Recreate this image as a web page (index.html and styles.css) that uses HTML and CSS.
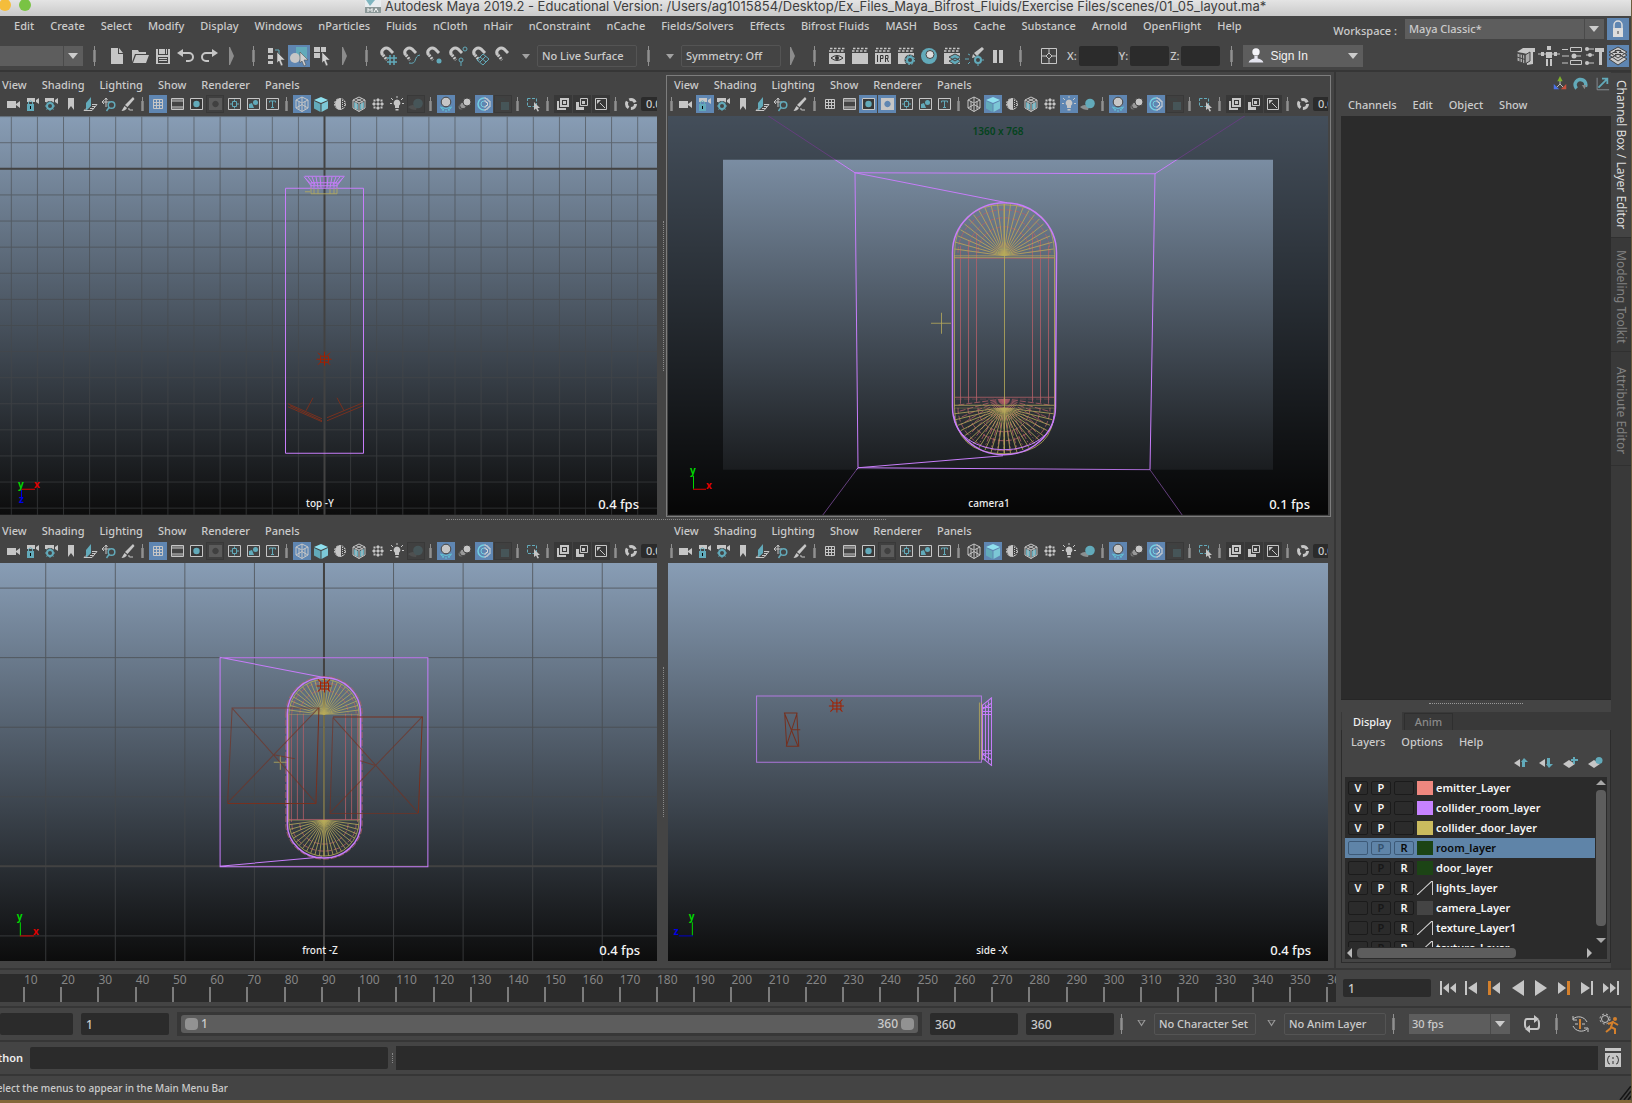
FILE: index.html
```html
<!DOCTYPE html>
<html lang="en">
<head>
<meta charset="utf-8">
<title>Autodesk Maya 2019.2</title>
<link rel="stylesheet" href="styles.css">
</head>
<body>
<svg class="defs" aria-hidden="true">
  <defs>
    <linearGradient id="sky" x1="0" y1="0" x2="0" y2="1"><stop offset="0" stop-color="#889db5"/><stop offset="1" stop-color="#0c0c0c"/></linearGradient>
    <pattern id="gridTop" width="26.1" height="26.1" patternUnits="userSpaceOnUse" x="10.8" y="0.4"><path d="M.5 0V26.1M0 .5H26.1" stroke="#444648" stroke-width="1"/></pattern>
    <pattern id="gridFront" width="69.3" height="69.3" patternUnits="userSpaceOnUse" x="46.3" y="24.5"><path d="M.5 0V69.3M0 .5H69.3" stroke="#444648" stroke-width="1"/></pattern>
  </defs>
  <symbol id="fan" viewBox="-100 -100 200 100" preserveAspectRatio="none"><path vector-effect="non-scaling-stroke" fill="none" d="M-100 0H100M0 0L99-13M0 0L97-26M0 0L92-38M0 0L87-50M0 0L79-61M0 0L71-71M0 0L61-79M0 0L50-87M0 0L38-92M0 0L26-97M0 0L13-99M0 0V-100M0 0L-99-13M0 0L-97-26M0 0L-92-38M0 0L-87-50M0 0L-79-61M0 0L-71-71M0 0L-61-79M0 0L-50-87M0 0L-38-92M0 0L-26-97M0 0L-13-99"/></symbol>
  <symbol id="star" viewBox="-8 -8 16 16"><path d="M-7.500.5H7.500M.5-7V7M-6-6L-3-3M6 6L3 3M6-6L3-3M-6 6L-3 3M-3.500-2.500H4.500V3.500H-3.500Z" fill="none" stroke="#a32000"/></symbol>

  <!-- panel icons, 18 x 18 -->
  <symbol id="cam" viewBox="0 0 18 18"><path class="f" d="M2 6h9v7H2zM11 9l4-3v7l-4-3z"/></symbol>
  <symbol id="camlock" viewBox="0 0 18 18"><path class="f" d="M3 3h8v4H3zM12 5l3-2v6l-3-2z"/><path class="t" d="M3 9h7v7H3z"/><path class="ts" d="M4.500 9V7q2-2.500 4 0v2"/><path d="M6 11h1v3H6z"/></symbol>
  <symbol id="camgear" viewBox="0 0 18 18"><path class="f" d="M2 3h9v4H2zM12 5l3-2v6l-3-2z"/><circle cx="7" cy="11" r="5" fill="#444"/><circle class="ts" cx="7" cy="11" r="3" stroke-width="2"/><path class="ts" d="M7 6v2M7 14v2M2 11h2M10 11h2M3.500 7.500l1 1M10.500 7.500l-1 1M3.500 14.500l1-1M10.500 14.500l-1-1"/></symbol>
  <symbol id="mark" viewBox="0 0 18 18"><path class="f" d="M6 3h6v12l-3-4-3 4z"/></symbol>
  <symbol id="plane" viewBox="0 0 18 18"><path class="t" d="M5 8l5-6v9l-5 5z"/><path class="s" d="M11 9.500h5l-5 6H3l2-2M11 11.500h3M9 13.500h4"/></symbol>
  <symbol id="pan" viewBox="0 0 18 18"><path class="s" d="M2 7h8M6 3v9M2 7l2-2M2 7l2 2M6 3L4.500 5M6 3l1.500 2"/><circle class="ts" cx="11.500" cy="10" r="3.300" stroke-width="1.500"/><path class="ts" stroke-width="1.500" d="M9 12.500L6.500 16"/></symbol>
  <symbol id="pen" viewBox="0 0 18 18"><path class="f" d="M14 2l1.500 2-7 8-2.500-2zM5.500 11l2.500 2c-1 2-3 3-5.500 3z"/><path class="s" d="M10 13q-1 2 1 2h3"/></symbol>
  <symbol id="grid" viewBox="0 0 18 18"><path class="s" d="M4.500 4.500h9v9h-9zM4.500 7.500h9M4.500 10.500h9M7.500 4.500v9M10.500 4.500v9"/></symbol>
  <symbol id="film" viewBox="0 0 18 18"><path class="s" d="M3.500 3.500h12v11h-12zM3.500 6h12M3.500 12h12"/><path class="s" stroke-dasharray="1 1" d="M3.500 4.700h12M3.500 13.300h12"/></symbol>
  <symbol id="resgate" viewBox="0 0 18 18"><path d="M3 3h12v12H3z" fill="#383838"/><path class="s" d="M3.500 3.500h12v11h-12z"/><circle class="t" cx="9.500" cy="9" r="3.200"/></symbol>
  <symbol id="gatemask" viewBox="0 0 18 18"><path class="f" fill-rule="evenodd" d="M3 3h13v12H3zM9.500 5.800a3.200 3.200 0 1 0 .01 0z"/></symbol>
  <symbol id="field" viewBox="0 0 18 18"><path class="s" d="M3.500 3.500h12v11h-12z"/><path class="ts" d="M7.500 6.500h4v5h-4zM9.500 4.500v2M9.500 11.500v2M5 9h2.500M11.500 9h2.500"/></symbol>
  <symbol id="safe" viewBox="0 0 18 18"><path class="s" d="M3.500 3.500h12v11h-12z"/><circle class="t" cx="11.500" cy="7.500" r="2.500"/><path class="t" d="M5 13V9l3-1 2 5z"/></symbol>
  <symbol id="title" viewBox="0 0 18 18"><path class="s" d="M3.500 3.500h12v11h-12z"/><path class="ts" d="M6.500 7.500V6h6v1.500M9.500 6v6.500M8 12.500h3"/></symbol>
  <symbol id="wire" viewBox="0 0 18 18"><path class="s" d="M9 2l6 3v8l-6 3.500L3 13V5zM3 5l6 3 6-3M9 8v8.500M9 2v5M3 13l6-3.500 6 3.500M6 6.500v8M12 6.500v8"/></symbol>
  <symbol id="shade" viewBox="0 0 18 18"><path fill="#8fe0ee" d="M9 2l7 3-7 3-7-3z"/><path class="t" d="M2 6l6.500 3v8L2 13.500z"/><path fill="#7cc7d6" d="M16 6L9.500 9v8l6.500-3.500z"/></symbol>
  <symbol id="half" viewBox="0 0 18 18"><circle class="s" cx="9" cy="9" r="5.500" stroke-dasharray="2 1"/><path class="f" d="M10 3a6 6 0 0 0 0 12z"/><path class="s" stroke-dasharray="1 1" d="M11.500 5v9M13.500 6v6"/></symbol>
  <symbol id="texcube" viewBox="0 0 18 18"><path class="t" d="M4 7l4 2v6l-4-2zM10 9l4-2v6l-4 2z"/><path class="s" d="M9 2l6 3v8l-6 3.500L3 13V5zM3 5l6 3 6-3M9 8v8.500M6 3.500l6 3v8M12 3.500l-6 3v8"/></symbol>
  <symbol id="checker" viewBox="0 0 18 18"><path class="f" d="M9 3l2 2-2 2-2-2zM5 7l2 2-2 2-2-2zM9 7l2 2-2 2-2-2zM13 7l2 2-2 2-2-2zM9 11l2 2-2 2-2-2zM4.500 4.500h2v2h-2zM11.500 4.500h2v2h-2zM4.500 11.500h2v2h-2zM11.500 11.500h2v2h-2z"/></symbol>
  <symbol id="bulb" viewBox="0 0 18 18"><path class="f" d="M9 4.500a3.500 3.500 0 0 1 2 6.300V13H7v-2.200a3.500 3.500 0 0 1 2-6.300zM7.500 14h3v1.500h-3z"/><path class="s" d="M9 1v2M3 3l2 2M15 3l-2 2M2 8.500h2M14 8.500h2"/></symbol>
  <symbol id="shadow" viewBox="0 0 18 18"><path fill="#8a8f90" d="M1 12q5-4 9 0l-1 3q-5 0-8-3z"/><circle class="t" cx="11" cy="8.500" r="4.800"/></symbol>
  <symbol id="ao" viewBox="0 0 18 18"><path d="M3 12q6 3 12 0M5 15h2M8 16h2M11 15h2M4 13l3 2M14 13l-3 2" fill="none" stroke="#63c3d4"/><circle class="f" cx="9" cy="7" r="4.800" stroke="#444"/></symbol>
  <symbol id="blur" viewBox="0 0 18 18"><circle cx="5" cy="12" r="2.500" fill="#777"/><circle cx="7" cy="10.500" r="3.300" fill="#999" stroke="#444"/><circle class="f" cx="11" cy="7" r="4" stroke="#444"/></symbol>
  <symbol id="aa" viewBox="0 0 18 18"><path d="M9 3a6 6 0 1 0 0 12" fill="none" stroke="#74cfe0" stroke-width="1.500"/><path d="M9 3h2v1h2v2h2v6h-2v2h-2v1H9M9 6h2v1.500h1.500v3H11V12H9" fill="none" stroke="#d8d8d8"/><path d="M9 6a3 3 0 0 0 0 6" fill="none" stroke="#74cfe0"/></symbol>
  <symbol id="dof" viewBox="0 0 18 18"><path d="M3 3h8v3H3z" fill="#3b4a4b"/><path class="t" d="M7 7h8v8H7z"/></symbol>
  <symbol id="iso" viewBox="0 0 18 18"><path class="ts" stroke-dasharray="3 1.500" d="M3.500 3.500h9v8h-9z"/><path class="f" d="M10 7l6 6h-2.500l1.500 3-1.500.5-1.500-3-2 1.500z"/></symbol>
  <symbol id="xray" viewBox="0 0 18 18"><path d="M0 0h18v18H0z" fill="#383838"/><path class="f" fill-rule="evenodd" d="M6 3h9v9h-9zM8 5v5h5V5z"/><path class="f" d="M3 6h2v7h7v2H3zM9 6h3v3H9z"/></symbol>
  <symbol id="xjoint" viewBox="0 0 18 18"><path d="M0 0h18v18H0z" fill="#383838"/><path class="s" d="M7.500 3.500h7v7h-7z"/><path class="f" d="M3 7h3v5h5v3H3zM9 6h3v3H9z"/></symbol>
  <symbol id="xcomp" viewBox="0 0 18 18"><path d="M0 0h18v18H0z" fill="#383838"/><path class="s" d="M3.500 3.500h11v11h-11zM8 8l5 5"/><path class="f" d="M5 5h4l-4 4z"/></symbol>
  <symbol id="expo" viewBox="0 0 18 18"><circle cx="9" cy="9" r="4.500" fill="none" stroke="#c6c6c6" stroke-width="3" stroke-dasharray="7 2.420"/></symbol>

  <!-- status line icons, 22 x 22 -->
  <symbol id="new" viewBox="0 0 22 22"><path class="f" d="M5 3h7v6h5v10H5zM13 3l4 5h-4z"/></symbol>
  <symbol id="open" viewBox="0 0 22 22"><path class="f" d="M3 5h6l1 2h7v2H6L3 17zM7 10h13l-3 8H4z"/></symbol>
  <symbol id="save" viewBox="0 0 22 22"><path class="f" fill-rule="evenodd" d="M4 4h2v6h10V4h2v15H4zM6 12v6h10v-6z"/><path class="f" d="M7 4h6v5H7zM14 4h1v5h-1zM7 13h8v1H7zM7 15h8v1H7z"/></symbol>
  <symbol id="undo" viewBox="0 0 22 22"><path d="M6 8h8a4 4 0 0 1 0 8h-3" fill="none" stroke="#c6c6c6" stroke-width="2"/><path class="f" d="M2 8l6-4v8z"/></symbol>
  <symbol id="selh" viewBox="0 0 22 22"><path class="f" d="M3 3h5v5H3zM3 10h5v4H3zM3 16h5v3H3z"/><path class="ts" d="M10 5h4v8"/><path class="arrow" d="M12 7l8 8h-4l2 5-2 1-2-5-2 2z"/></symbol>
  <symbol id="selo" viewBox="0 0 22 22"><path class="t" d="M8 2h11v12H8z"/><circle class="f" cx="7" cy="13" r="5"/><path class="arrow" d="M12 7l8 8h-4l2 5-2 1-2-5-2 2z"/></symbol>
  <symbol id="selc" viewBox="0 0 22 22"><path class="f" d="M3 2h6v5H3zM10 2h5v5h-5zM3 8h6v5H3z"/><path class="arrow" d="M11 7l8 8h-4l2 5-2 1-2-5-2 2z"/></symbol>
  <symbol id="magnet" viewBox="0 0 22 22"><path d="M5 10L4 9a4.500 4.500 0 0 1 7-5l4 4" fill="none" stroke="#c6c6c6" stroke-width="3"/><path d="M5 10l4 5" fill="none" stroke="#c6c6c6" stroke-width="3" stroke-dasharray="2 1"/></symbol>
  <symbol id="mgrid" viewBox="0 0 22 22"><use href="#magnet"/><path class="ts" stroke-width="1.500" d="M9 13h10M9 17h10M12 10v10M16 10v10"/></symbol>
  <symbol id="mcurve" viewBox="0 0 22 22"><use href="#magnet"/><path class="ts" d="M8 18c9 2 4-7 11-8"/></symbol>
  <symbol id="mpoint" viewBox="0 0 22 22"><use href="#magnet"/><circle class="t" cx="15" cy="16" r="2.500"/></symbol>
  <symbol id="mproj" viewBox="0 0 22 22"><use href="#magnet"/><circle class="ts" cx="18" cy="4" r="2"/><circle class="ts" cx="14" cy="15" r="2"/><path class="ts" d="M14 17v4"/></symbol>
  <symbol id="mplane" viewBox="0 0 22 22"><use href="#magnet"/><path class="ts" d="M13 9l6 5-6 6-6-5zM10 12l6 5M16 11l-6 6"/></symbol>
  <symbol id="clap" viewBox="0 0 22 22"><path class="f" d="M3 8h16v11H3z"/><path d="M3 6h16M4 3.500h15" stroke="#c6c6c6" stroke-width="1.500" stroke-dasharray="2.500 1.500"/></symbol>
  <symbol id="rview" viewBox="0 0 22 22"><use href="#clap"/><path d="M5 13q6-5 12 0q-6 5-12 0z" fill="none" stroke="#333"/><circle cx="11" cy="13" r="2" fill="#333"/></symbol>
  <symbol id="ripr" viewBox="0 0 22 22"><use href="#clap"/><path d="M5.500 10v7M8.500 17v-6.500h2.500v3H8.500M13.500 17v-6.500H16v3h-2.500M15 13.500l1.500 3.500" fill="none" stroke="#333"/></symbol>
  <symbol id="rset" viewBox="0 0 22 22"><use href="#clap"/><circle cx="15" cy="15" r="5.500" fill="#444"/><circle cx="15" cy="15" r="3" fill="none" stroke="#62aaba" stroke-width="2"/><circle class="ts" cx="15" cy="15" r="4.500" stroke-dasharray="2 1.500"/></symbol>
  <symbol id="hyper" viewBox="0 0 22 22"><circle class="t" cx="11" cy="11" r="8"/><circle cx="12" cy="9.500" r="4" fill="#ddd" stroke="#444"/></symbol>
  <symbol id="rlay" viewBox="0 0 22 22"><use href="#clap"/><path class="t" stroke="#444" d="M14 13l6 3-6 4-6-4zM14 9l6 3-6 4-6-4z"/></symbol>
  <symbol id="lite" viewBox="0 0 22 22"><path class="f" d="M18 2l2 2-7 7-3-3zM9 9l3 3-4 1z"/><circle cx="14" cy="15" r="3" fill="none" stroke="#62aaba" stroke-width="2"/><path class="ts" d="M4 9l2 1M1 14h4M4 19l2-2M14 10v1M14 19v2M18 15h2"/></symbol>
  <symbol id="pause" viewBox="0 0 22 22"><path class="f" d="M6 5h4v13H6zM12 5h4v13h-4z"/></symbol>
  <symbol id="input" viewBox="0 0 22 22"><path class="s" d="M3.500 3.500h15v15h-15zM11 3.500v5M11 13.500v5M3.500 11h5M13.500 11h5M11 8l3 3-3 3-3-3z"/></symbol>
  <symbol id="lock" viewBox="0 0 22 22"><path d="M7 10V7a4 4 0 0 1 8 0v3" fill="none" stroke="#ddd" stroke-width="1.500"/><path fill="#ddd" d="M6 10h10v9H6z"/><path d="M11 13v3" stroke="#444"/></symbol>
  <symbol id="user" viewBox="0 0 22 22"><circle cx="11" cy="6" r="4.500" fill="#f4f4f8"/><path fill="#e4e4ee" d="M9 11h4v3q6 1 7 5H2q1-4 7-5z"/></symbol>
  <symbol id="mtk" viewBox="0 0 22 22"><path class="f" d="M2 7l6-4h12v4h-2v12l-6 1V9L8 8z"/><path fill="#aaa" stroke="#444" d="M2 8l8 2v9l-8-3zM10 10l5-3v9l-5 3z"/><path d="M2 12l8 2.500M5 9v8M7.500 10v8" stroke="#444"/></symbol>
  <symbol id="rig" viewBox="0 0 22 22"><path class="f" d="M9 1h4v4H9zM8 7h6v6H8zM3 7h3v4H3zM16 7h3v4h-3zM8 14h2v7H8zM12 14h2v7h-2z"/><path class="s" d="M0 9h22"/></symbol>
  <symbol id="attr" viewBox="0 0 22 22"><path class="s" d="M1 4.500h6M1 11h7M1 18h6M9.500 2.500h11v4h-11zM9.500 15.500h11v4h-11zM14 11h6"/><circle class="f" cx="13" cy="11" r="2.500"/></symbol>
  <symbol id="tools" viewBox="0 0 22 22"><path class="s" d="M2 4h8M2 10h8M2 18h8"/><circle class="f" cx="3" cy="4" r="2"/><circle class="f" cx="6" cy="10" r="2"/><circle class="f" cx="3" cy="18" r="2"/><path class="f" d="M11 3h9v4h-2v13h-3V7h-4z"/></symbol>
  <symbol id="layers" viewBox="0 0 22 22"><path fill="#ccc" stroke="#444" d="M11 9l9 5-9 6-9-6zM11 5l9 5-9 6-9-6zM11 2l9 5-9 6-9-6z"/><path d="M6 7.500h4M12 7.500h4M8 9.500h6M8 5.500h6" stroke="#444"/></symbol>
</svg>

<header class="titlebar">
  <span class="dot amber"></span><span class="dot green"></span>
  <svg class="docicon" viewBox="0 0 16 16" aria-hidden="true"><path d="M0 0h16v13H0z" fill="#e9eef0"/><path d="M1 0h9l-5 6z" fill="#7fb6c0"/><path d="M0 7h16v6H0z" fill="#8b9898"/><path d="M3 12V8.500l2 2 2-2V12M9 12l2-3.500L13 12" fill="none" stroke="#fff"/></svg>
  <h1>Autodesk Maya 2019.2 - Educational Version: /Users/ag1015854/Desktop/Ex_Files_Maya_Bifrost_Fluids/Exercise Files/scenes/01_05_layout.ma*</h1>
</header>

<div class="menubar">
  <nav class="menu main-menu" aria-label="Main menu">
    <button>Edit</button><button>Create</button><button>Select</button><button>Modify</button><button>Display</button><button>Windows</button><button>nParticles</button><button>Fluids</button><button>nCloth</button><button>nHair</button><button>nConstraint</button><button>nCache</button><button>Fields/Solvers</button><button>Effects</button><button>Bifrost Fluids</button><button>MASH</button><button>Boss</button><button>Cache</button><button>Substance</button><button>Arnold</button><button>OpenFlight</button><button>Help</button>
  </nav>
  <label class="ws-label" for="ws">Workspace :</label>
  <span class="combo ws"><select id="ws"><option>Maya Classic*</option></select></span>
  <button class="tool on" aria-label="Lock workspace"><svg><use href="#lock"/></svg></button>
</div>

<div class="statusline">
  <span class="combo mode"><select aria-label="Menu set"><option></option></select></span>
  <i class="sep"></i>
  <button class="tool" aria-label="New scene"><svg><use href="#new"/></svg></button>
  <button class="tool" aria-label="Open scene"><svg><use href="#open"/></svg></button>
  <button class="tool" aria-label="Save scene"><svg><use href="#save"/></svg></button>
  <button class="tool" aria-label="Undo"><svg><use href="#undo"/></svg></button>
  <button class="tool flip" aria-label="Redo"><svg><use href="#undo"/></svg></button>
  <i class="chev"></i><i class="sep"></i>
  <button class="tool" aria-label="Select by hierarchy"><svg><use href="#selh"/></svg></button>
  <button class="tool on" aria-label="Select by object"><svg><use href="#selo"/></svg></button>
  <button class="tool" aria-label="Select by component"><svg><use href="#selc"/></svg></button>
  <i class="chev"></i><i class="sep"></i>
  <button class="tool" aria-label="Snap to grids"><svg><use href="#mgrid"/></svg></button>
  <button class="tool" aria-label="Snap to curves"><svg><use href="#mcurve"/></svg></button>
  <button class="tool" aria-label="Snap to points"><svg><use href="#mpoint"/></svg></button>
  <button class="tool" aria-label="Snap to projected center"><svg><use href="#mproj"/></svg></button>
  <button class="tool" aria-label="Snap to view planes"><svg><use href="#mplane"/></svg></button>
  <button class="tool" aria-label="Make live"><svg><use href="#magnet"/></svg></button>
  <i class="drop"></i>
  <button class="outlined live">No Live Surface</button>
  <i class="sep"></i><i class="drop"></i>
  <button class="outlined live">Symmetry: Off</button>
  <i class="chev"></i><i class="sep"></i>
  <button class="tool" aria-label="Render view"><svg><use href="#rview"/></svg></button>
  <button class="tool" aria-label="Render frame"><svg><use href="#clap"/></svg></button>
  <button class="tool" aria-label="IPR render"><svg><use href="#ripr"/></svg></button>
  <button class="tool" aria-label="Render settings"><svg><use href="#rset"/></svg></button>
  <button class="tool" aria-label="Hypershade"><svg><use href="#hyper"/></svg></button>
  <button class="tool" aria-label="Render setup"><svg><use href="#rlay"/></svg></button>
  <button class="tool" aria-label="Light editor"><svg><use href="#lite"/></svg></button>
  <button class="tool" aria-label="Pause viewport"><svg><use href="#pause"/></svg></button>
  <i class="sep"></i>
  <button class="tool coord" aria-label="Input mode"><svg><use href="#input"/></svg></button>
  <label class="xyz">X:<input type="text"></label>
  <label class="xyz">Y:<input type="text"></label>
  <label class="xyz">Z:<input type="text"></label>
  <i class="sep"></i>
  <button class="signin"><svg><use href="#user"/></svg>Sign In<i class="caret"></i></button>
  <span class="spring"></span>
  <button class="tool" aria-label="Modeling toolkit"><svg><use href="#mtk"/></svg></button>
  <button class="tool" aria-label="Character controls"><svg><use href="#rig"/></svg></button>
  <button class="tool" aria-label="Attribute editor"><svg><use href="#attr"/></svg></button>
  <button class="tool" aria-label="Tool settings"><svg><use href="#tools"/></svg></button>
  <button class="tool on" aria-label="Channel box"><svg><use href="#layers"/></svg></button>
</div>

<main class="workspace">
  <div class="views">
    <section class="panel left" data-on="grid wire ao aa" data-off="gatemask shadow dof">
      <svg class="canvas" viewBox="0 0 657 399" preserveAspectRatio="xMidYMid slice">
        <rect width="657" height="399" fill="url(#sky)"/>
        <rect width="657" height="399" fill="url(#gridTop)" opacity=".6"/>
        <path d="M0 53H657M324.500 0V399" stroke="#424242" stroke-width="2"/>
        <path d="M285.500 72.500H363.500V337.500H285.500Z" class="room"/>
        <path class="door" d="M311 72v6h26v-6M314 73v5M318 73v5M330 73v5M334 73v5M305 76h5"/>
        <path class="room" d="M304.500 60.500h40M304 61l7 7M344 61l-7 7M311 67h26M311 70h26M311 67v5M337 67v5M308 61l5 7M312 61l3 8M316 61l2 11M320 61l1 11M324 61v11M328 61l-1 11M332 61l-2 11M336 61l-3 8M340 61l-5 7M314 67v5M334 67v5M305 62l6 8M343 62l-6 8"/>
        <use href="#star" x="316" y="235" width="16" height="16"/>
        <path class="light" d="M288 288l34 15M288 291l34 15M290 290l32 15M363 287l-36 15M363 290l-36 15M313 282l-7 13M337 282l7 13"/>
        <path stroke="#e00000" d="M21 373.500H35"/><path stroke="#0000e8" d="M21.500 374V384"/>
        <text class="ax g" x="18" y="372">y</text><text class="ax r" x="34" y="372">x</text><text class="ax b" x="19" y="387">z</text>
        <text class="hud" x="320" y="391" text-anchor="middle">top -Y</text>
        <text class="fps" x="639" y="393" text-anchor="end">0.4 fps</text>
      </svg>
    </section>
    <i class="split v"></i>
    <section class="panel active" data-on="camlock resgate gatemask shade bulb ao aa" data-off="dof">
      <svg class="canvas" viewBox="0 0 660 399" preserveAspectRatio="xMidYMid slice">
        <rect width="660" height="399" fill="url(#sky)"/>
        <path class="emitline" d="M292.500 130V288M300.500 124V287M308.500 118V286M364.500 118V286M372.500 124V287M380.500 130V288M287 281.500H386M287 142.500H386"/>
        <path class="emit" d="M290 137a46 43 0 0 1 92 0M300 137a36 35 0 0 1 72 0M310 137a26 26 0 0 1 52 0M290 292a46 43 0 0 0 92 0M300 292a36 33 0 0 0 72 0M310 292a26 24 0 0 0 52 0"/>
        <use class="emit" href="#fan" x="288" y="88" width="96" height="52" opacity=".5"/>
        <use class="emit" href="#fan" x="288" y="283" width="96" height="50" transform="matrix(1 0 0 -1 0 616)"/>
        <use class="door" href="#fan" x="286" y="88" width="100" height="52"/>
        <use class="door" href="#fan" x="286" y="292" width="100" height="46" transform="matrix(1 0 0 -1 0 630)"/>
        <path class="door" d="M286.500 139q0-50 50-50t50 50V292q0 46-50 46t-50-46ZM336.500 88V338M286 141.500H386M286 289.500H386M263 207.500H283M273.500 197V218"/>
        <path class="room" d="M187 57L487 58L482 354L190 352ZM100 0L187 57L339 87M577 0L487 58M155 399L190 352L335 340M514 399L482 354"/>
        <path class="room thick" d="M284.500 137a52 50 0 0 1 104 0L387.500 291a51.500 48 0 0 1-103 0Z"/>
        <path class="room" d="M286 300a50 34 0 0 0 100 0"/>
        <path fill="#000" opacity=".5" fill-rule="evenodd" d="M0 0H660V399H0ZM55 44V354H605V44Z"/>
        <path stroke="#e00000" d="M25 373.500H38"/><path stroke="#00d800" d="M25.500 373V360"/>
        <text class="ax g" x="22" y="358">y</text><text class="ax r" x="38" y="373">x</text>
        <text class="hud res" x="330" y="19" text-anchor="middle">1360 x 768</text>
        <text class="hud" x="321" y="391" text-anchor="middle">camera1</text>
        <text class="fps" x="642" y="393" text-anchor="end">0.1 fps</text>
      </svg>
    </section>
    <i class="split h"></i>
    <section class="panel left" data-on="grid wire ao aa" data-off="gatemask shadow dof">
      <svg class="canvas" viewBox="0 0 657 397" preserveAspectRatio="xMidYMid slice">
        <rect width="657" height="397" fill="url(#sky)"/>
        <rect width="657" height="397" fill="url(#gridFront)" opacity=".7"/>
        <path d="M0 302H657M324 0V397" stroke="#424242" stroke-width="2"/>
        <path class="emitline" d="M288.500 150V258M291.500 150V258M297.500 150V256M303.500 150V256M345.500 150V256M351.500 150V256M357.500 150V258M288 255.500H361"/>
        <path class="emit" d="M292 150a32 31 0 0 1 64 0M300 150a24 23 0 0 1 48 0M292 260a32 27 0 0 0 64 0M300 260a24 20 0 0 0 48 0M286 150a38 37 0 0 1 76 0V260a38 35 0 0 1-76 0Z"/>
        <use class="door" href="#fan" x="289" y="116" width="70" height="35"/>
        <use class="door" href="#fan" x="289" y="256" width="70" height="36" transform="matrix(1 0 0 -1 0 548)"/>
        <path class="door" d="M289 151a35 35 0 0 1 70 0V257a35 35 0 0 1-70 0ZM324 116V292M274 198.500H287M280.500 192V206"/>
        <path class="room" d="M220.500 94.500H427.500V302.500H220.500ZM220 94L324 114M220 302L322 293"/>
        <path class="room thick" d="M287.500 150a36.500 36 0 0 1 73 0V260a36.500 34 0 0 1-73 0Z"/>
        <path class="light" d="M228 239.500H316L319 144M333 153.500H422L418 249"/>
        <path class="light faint" d="M319 144.500H232.500L228 239M232 144L316 239M228 239L319 144M274 191L295 195M333 154L330 249.500H418M333 154L418 249M330 249L422 153M376 202L360 197"/>
        <use href="#star" x="316" y="114" width="16" height="16"/>
        <path stroke="#e00000" d="M21 371.500H35"/><path stroke="#00d800" d="M21.500 371V358"/>
        <text class="ax g" x="18" y="356">y</text><text class="ax r" x="34" y="371">x</text>
        <text class="hud" x="320" y="390" text-anchor="middle">front -Z</text>
        <text class="fps" x="639" y="391" text-anchor="end">0.4 fps</text>
      </svg>
    </section>
    <i class="split v"></i>
    <section class="panel" data-on="shade ao aa" data-off="gatemask dof">
      <svg class="canvas" viewBox="0 0 660 397" preserveAspectRatio="xMidYMid slice">
        <rect width="660" height="397" fill="url(#sky)"/>
        <path class="room" opacity=".8" d="M89.500 132.500H313.500V198.500H89.500Z"/>
        <path class="light" d="M117.500 149.500H129.500L131.500 182.500H119.500ZM117 149L131 183M130 149L119 183M125 166h8"/>
        <use href="#star" x="161" y="134" width="16" height="16"/>
        <path class="door" d="M311.500 139V196M313.500 139V196"/>
        <path class="room" d="M323.500 135V201M320.500 138V198M317.500 141V196M314.500 141V196M314 142l10-8M314 194l10 8M314 146l9-6M314 190l9 6M314 144h9M314 190h9M314 187h9M314 148h9M314 151h9"/>
        <path stroke="#00d800" d="M25.500 371V358"/><path stroke="#0000c8" d="M26 371.500H12"/>
        <text class="ax g" x="22" y="356">y</text><text class="ax b" x="7" y="371">z</text>
        <text class="hud" x="324" y="390" text-anchor="middle">side -X</text>
        <text class="fps" x="642" y="391" text-anchor="end">0.4 fps</text>
      </svg>
    </section>
  </div>

  <aside class="dock">
    <div class="dock-icons">
      <svg viewBox="0 0 18 18"><path d="M9 9v-4M9 9l-5 5M9 9l5 5" stroke="#ccc"/><path d="M9 0l3 6H6z" fill="#7fb02c"/><path d="M2 9l6 6H2z" fill="#4a72e8"/><path d="M16 9l-6 6h6z" fill="#c9503c"/></svg>
      <svg viewBox="0 0 18 18"><path d="M4 14a6 6 0 1 1 10-2" fill="none" stroke="#62aaba" stroke-width="4"/><path d="M10 10h5l-2 5z" fill="#888"/></svg>
      <svg viewBox="0 0 18 18"><path d="M3.500 2v13.500H17" fill="none" stroke="#8b9399"/><path d="M5 13L14 4M9 3h6v6" fill="none" stroke="#62aaba" stroke-width="2"/></svg>
    </div>
    <nav class="menu channel-menu" aria-label="Channel box"><button>Channels</button><button>Edit</button><button>Object</button><button>Show</button></nav>
    <div class="channels"></div>
    <i class="grip"></i>
    <div class="layer-editor">
      <div class="tabs" role="tablist"><button class="tab sel" role="tab">Display</button><button class="tab" role="tab">Anim</button></div>
      <div class="layer-body">
        <nav class="menu layer-menu" aria-label="Layer editor"><button>Layers</button><button>Options</button><button>Help</button></nav>
        <div class="layer-icons">
          <svg viewBox="0 0 16 12"><path class="f" d="M1 6l6-4v8z"/><path class="t" d="M11 1l4 4h-3v5h-3V5H8z"/></svg>
          <svg viewBox="0 0 16 12"><path class="f" d="M1 6l6-4v8z"/><path class="t" d="M11 11l4-4h-3V1h-3v6H8z"/></svg>
          <svg viewBox="0 0 16 12"><path class="f" d="M0 7l6-4 6 4-6 4z"/><path class="t" d="M10 0h2v2h3v2h-3v3h-2V4H8V2h2z"/></svg>
          <svg viewBox="0 0 16 12"><path class="f" d="M0 7l6-4 6 4-6 4z"/><circle class="t" cx="11" cy="3.500" r="3.500"/></svg>
        </div>
        <div class="layer-list">
          <div class="rows">
            <table>
              <tbody>
                <tr><td><span class="box">V</span></td><td><span class="box">P</span></td><td><span class="box"></span></td><td><i class="sw coral"></i></td><td>emitter_Layer</td></tr>
                <tr><td><span class="box">V</span></td><td><span class="box">P</span></td><td><span class="box"></span></td><td><i class="sw violet"></i></td><td>collider_room_layer</td></tr>
                <tr><td><span class="box">V</span></td><td><span class="box">P</span></td><td><span class="box"></span></td><td><i class="sw sand"></i></td><td>collider_door_layer</td></tr>
                <tr class="picked"><td><span class="box"></span></td><td><span class="box dim">P</span></td><td><span class="box">R</span></td><td><i class="sw forest"></i></td><td>room_layer</td></tr>
                <tr><td><span class="box"></span></td><td><span class="box dim">P</span></td><td><span class="box">R</span></td><td><i class="sw forest"></i></td><td>door_layer</td></tr>
                <tr><td><span class="box">V</span></td><td><span class="box">P</span></td><td><span class="box">R</span></td><td><i class="sw slash"></i></td><td>lights_layer</td></tr>
                <tr><td><span class="box"></span></td><td><span class="box dim">P</span></td><td><span class="box">R</span></td><td><i class="sw gray"></i></td><td>camera_Layer</td></tr>
                <tr><td><span class="box"></span></td><td><span class="box dim">P</span></td><td><span class="box">R</span></td><td><i class="sw slash"></i></td><td>texture_Layer1</td></tr>
                <tr><td><span class="box"></span></td><td><span class="box dim">P</span></td><td><span class="box">R</span></td><td><i class="sw slash"></i></td><td>texture_Layer</td></tr>
              </tbody>
            </table>
          </div>
          <div class="vbar"><i class="a up"></i><i class="thumb"></i><i class="a down"></i></div>
          <div class="hbar"><i class="a prev"></i><i class="thumb"></i><i class="a next"></i></div>
        </div>
      </div>
    </div>
  </aside>
  <div class="side-tabs">
    <button class="side-tab current">Channel Box / Layer Editor</button>
    <button class="side-tab">Modeling Toolkit</button>
    <button class="side-tab">Attribute Editor</button>
  </div>
</main>

<div class="timebar">
  <ol class="timeline"></ol>
  <input class="num" type="text" value="1" aria-label="Current frame">
  <div class="play">
    <button aria-label="Go to start"><svg viewBox="0 0 18 18"><path class="f" d="M0 2h2v14H0zM9 4v10L3 9zM16 4v10l-6-5z"/></svg></button>
    <button aria-label="Step back frame"><svg viewBox="0 0 18 18"><path class="f" d="M2 2h2v14H2zM14 3v12L5 9z"/></svg></button>
    <button aria-label="Step back key"><svg viewBox="0 0 18 18"><path fill="#d4802c" d="M2 2h3v14H2z"/><path class="f" d="M14 3v12L6 9z"/></svg></button>
    <button aria-label="Play backwards"><svg viewBox="0 0 18 18"><path class="f" d="M15 1v16L3 9z"/></svg></button>
    <button aria-label="Play forwards"><svg viewBox="0 0 18 18"><path class="f" d="M3 1v16l12-8z"/></svg></button>
    <button aria-label="Step forward key"><svg viewBox="0 0 18 18"><path fill="#d4802c" d="M12 2h3v14h-3z"/><path class="f" d="M3 3v12l8-6z"/></svg></button>
    <button aria-label="Step forward frame"><svg viewBox="0 0 18 18"><path class="f" d="M13 2h2v14h-2zM3 3v12l9-6z"/></svg></button>
    <button aria-label="Go to end"><svg viewBox="0 0 18 18"><path class="f" d="M16 2h2v14h-2zM2 4v10l6-5zM9 4v10l6-5z"/></svg></button>
  </div>
</div>

<div class="rangebar">
  <input class="num first" type="text" aria-label="Animation start">
  <input class="num" type="text" value="1" aria-label="Playback start">
  <div class="range"><div class="range-fill"><i class="knob"></i><span>1</span><span class="spring"></span><span>360</span><i class="knob"></i></div></div>
  <input class="num" type="text" value="360" aria-label="Playback end">
  <input class="num" type="text" value="360" aria-label="Animation end">
  <i class="sep"></i><i class="tri"></i>
  <button class="outlined set">No Character Set</button>
  <i class="tri"></i>
  <button class="outlined set">No Anim Layer</button>
  <i class="sep"></i>
  <span class="combo rate"><select aria-label="Frame rate"><option>30 fps</option></select></span>
  <button class="tool loop" aria-label="Loop"><svg viewBox="0 0 22 22"><path d="M14 6H6q-2 0-2 3v3q0 2 1 3M8 16h8q2 0 2-3v-3q0-2-1-3" fill="none" stroke="#c6c6c6" stroke-width="2"/><path class="f" d="M13 2l5 4-5 4zM9 12l-5 4 5 4z"/></svg></button>
  <i class="sep"></i>
  <button class="tool" aria-label="Auto key"><svg viewBox="0 0 22 22"><path class="s" d="M4 6a9 9 0 0 1 14 3M18 16a9 9 0 0 1-14-3M4 3v4h4M19 19v-4h-4M6 11h3M13 11h3"/><path d="M11 6v10" stroke="#d4802c" stroke-width="2"/></svg></button>
  <button class="tool" aria-label="Preferences"><svg viewBox="0 0 22 22"><circle class="s" cx="6" cy="6" r="3.500"/><circle class="s" cx="6" cy="6" r="5" stroke-dasharray="2 2"/><circle cx="16" cy="6" r="2" fill="#d4802c"/><path d="M14 8l-2 6 4 2v5M12 15l-5 4M9 11l5-2 5 3" fill="none" stroke="#d4802c" stroke-width="2"/></svg></button>
</div>

<div class="cmdbar">
  <label class="lang" for="cmd">Python</label>
  <input class="cmd" id="cmd" type="text">
  <i class="cmd-grip"></i>
  <output class="result"></output>
  <button class="tool" aria-label="Script editor"><svg viewBox="0 0 22 22"><path class="f" d="M3 1h16v3H3zM3 6h16v14H3z"/><path d="M8 9q-2 0-2 2t-1 2q1 0 1 2t2 2M14 9q2 0 2 2t1 2q-1 0-1 2t-2 2M11 10v2M11 14v3" fill="none" stroke="#333"/></svg></button>
</div>

<footer class="helpline"><span>Select the menus to appear in the Main Menu Bar</span><svg class="resize" viewBox="0 0 12 14"><path d="M1 14L12 0M5 14l7-9M9 14l3-4" stroke="#151515" stroke-width="1.500"/></svg></footer>
<script src="app.js"></script>
</body>
</html>
```
FILE: styles.css
```css
* { box-sizing: border-box; }
body {
  margin: 0;
  height: 100vh;
  display: flex;
  flex-direction: column;
  overflow: hidden;
  background: #444;
  border-right: 1px solid #6d5c3d;
  border-bottom: 3px solid #836739;
  color: #cbcbcb;
  font: 500 11px/16px "Noto Sans", sans-serif;
}
button, input, select { font: inherit; color: inherit; }
button { background: none; border: 0; padding: 0; white-space: nowrap; }
input { border: 0; background: #2b2b2b; border-radius: 2px; min-width: 0; }
i { display: block; font-style: normal; flex: none; }
svg { display: block; }
.defs { position: absolute; width: 0; height: 0; }
.f { fill: #c6c6c6; }
.s { fill: none; stroke: #c6c6c6; }
.t { fill: #62aaba; }
.ts { fill: none; stroke: #62aaba; }
.arrow { fill: #d0d0d0; stroke: #444; stroke-width: 0.5; }
.spring { flex: 1; }

.titlebar {
  flex: none;
  height: 16px;
  display: flex;
  align-items: flex-start;
  justify-content: center;
  position: relative;
  background: linear-gradient(#e4e4e4, #c9c9c9);
  overflow: hidden;
}
.titlebar h1 { margin: 0; font: 400 13px/13px Inter, sans-serif; color: #3d3d3d; white-space: nowrap; }
.docicon { width: 16px; height: 16px; margin-right: 4px; }
.dot { position: absolute; top: -1px; width: 12px; height: 12px; border-radius: 50%; }
.amber { left: -1px; background: #f4bd3b; }
.green { left: 19px; background: #79c344; }

.menubar { flex: none; height: 26px; display: flex; align-items: center; padding-right: 2px; }
.menu { display: flex; gap: 16px; }
.main-menu { flex: 1; padding-left: 14px; height: 20px; align-items: center; align-self: flex-start; }
.ws-label { margin: 3px 8px 0 0; }
.combo { display: flex; position: relative; background: #5d5d5d; height: 20px; }
.combo select { appearance: none; background: none; border: 0; width: 100%; padding: 0 4px; }
.combo::after {
  content: "";
  position: absolute;
  right: 5px;
  top: 7px;
  border: 5px solid transparent;
  border-top: 6px solid #ccc;
  border-bottom: 0;
}
.combo::before { content: ""; position: absolute; right: 19px; top: 0; bottom: 0; width: 1px; background: #4a4a4a; }
.ws { width: 199px; margin: 0 3px 0 0; }

.tool { width: 22px; height: 22px; flex: none; }
.tool svg { width: 22px; height: 22px; }
.tool.on, .pt.on { background: #5f86b2; }
.flip svg { transform: scaleX(-1); }
.sep { width: 3px; height: 20px; background: linear-gradient(90deg, transparent 1px, #909090 1px 2px, transparent 2px), linear-gradient(transparent 4px, #7c7c7c 4px 16px, transparent 16px); }
.chev { width: 5px; height: 18px; background: #8c8c8c; clip-path: polygon(0 0, 1px 0, 100% 50%, 1px 100%, 0 100%); }
.drop { border: 4px solid transparent; border-top: 5px solid #a2a2a2; border-bottom: 0; }

.statusline {
  flex: none;
  height: 30px;
  display: flex;
  align-items: center;
  gap: 1px;
  padding-right: 2px;
  border-bottom: 2px solid #363636;
}
.mode { width: 83px; }
.statusline .sep { margin: 0 9px; }
.statusline .chev { margin: 0 8px; }
.statusline .drop { margin: 0 6px; }
.outlined { border: 1px solid #545454; border-radius: 2px; height: 22px; padding: 0 4px; text-align: left; }
.live { width: 100px; }
.coord { margin: 0 6px; }
.xyz { display: flex; align-items: center; gap: 2px; }
.xyz input { width: 39px; height: 20px; }
.signin { display: flex; align-items: center; gap: 3px; width: 120px; height: 22px; background: #5d5d5d; font: 400 12px/16px "Liberation Sans", sans-serif; color: #f2f2f2; padding: 0 5px 0 2px; }
.signin svg { width: 22px; height: 18px; }
.caret { margin-left: auto; border: 5px solid transparent; border-top: 6px solid #ccc; border-bottom: 0; }

.workspace { flex: 1; min-height: 0; display: flex; }
.views {
  flex: 1;
  min-width: 0;
  display: grid;
  grid-template-columns: 660fr 6px 665fr;
  grid-template-rows: 1fr 5px 1fr;
  padding: 3px 3px 5px 0;
}
.panel { display: flex; flex-direction: column; min-width: 0; min-height: 0; border: 1px solid transparent; padding: 0 2px 1px 1px; overflow: hidden; }
.panel.left { border-left: 0; padding-left: 0; }
.panel.active { border-color: #7d7d7d; }
.panel .menu { height: 17px; margin-bottom: 2px; align-items: center; padding-left: 6px; gap: 15px; }
.panel.left .menu { padding-left: 2px; }
.panel-tools { display: flex; gap: 1px; height: 18px; margin-bottom: 3px; align-items: center; flex: none; overflow: hidden; }
.left .panel-tools { padding-left: 5px; }
.pt, .pt svg { width: 18px; height: 18px; flex: none; }
.pt:disabled { background: #404040; outline: 1px solid #393939; outline-offset: -1px; }
.pt:disabled svg { opacity: 0.2; }
.panel-tools .sep { width: 3px; height: 14px; margin: 0 4px 0 3px; }
.panel-tools .sep:first-child { margin: 0 3px 0 2px; }
.panel-tools input { width: 30px; height: 14px; padding: 0 5px; flex: none; }
.canvas { width: 100%; height: 0; flex: 1; }
.split.v { align-self: center; justify-self: center; height: 150px; border-left: 1px dotted #888; }
.split.h { grid-column: 1 / 4; align-self: center; justify-self: center; width: 440px; border-top: 1px dotted #888; }
.room { fill: none; stroke: #c77dfa; }
.thick { stroke-width: 1.5; }
.door { fill: none; stroke: #b8ab5a; stroke-width: 0.8; }
.emit, .emitline { fill: none; stroke: #b35f68; stroke-width: 0.8; }
.emit { stroke-dasharray: 6 2; }
.light { fill: none; stroke: #76301f; }
.faint { opacity: 0.65; }
.hud { font: 500 10px "Noto Sans", sans-serif; fill: #eee; }
.hud.res { fill: #04431c; font-weight: 600; }
.fps { font: 500 13px "Noto Sans", sans-serif; fill: #f4f4f4; }
.ax { font: 700 10px "Noto Sans", sans-serif; }
.g { fill: #00d800; }
.r { fill: #e00000; }
.b { fill: #0000e8; }

.dock { flex: none; width: 277px; display: flex; flex-direction: column; border-left: 2px solid #363636; padding: 4px 0 5px 5px; }
.dock-icons { display: flex; justify-content: flex-end; gap: 5px; height: 17px; padding-right: 1px; }
.dock-icons svg { width: 16px; height: 16px; }
.channel-menu { height: 23px; align-items: center; padding-left: 7px; }
.channels { flex: 1; background: #2b2b2b; border-bottom: 1px solid #262626; }
.grip { width: 94px; margin: 3px auto 8px; border-top: 1px dotted #999; }
.layer-editor { display: flex; flex-direction: column; height: 251px; }
.tabs { display: flex; gap: 2px; background: #393939; height: 18px; align-items: flex-end; padding-left: 1px; }
.tab { height: 17px; width: 49px; color: #8a8a8a; border: 1px solid #2f2f2f; border-bottom: 0; }
.tab.sel { width: 60px; height: 18px; background: #444; border-color: #444; color: #f2f2f2; }
.layer-body { flex: 1; min-height: 0; display: flex; flex-direction: column; border: 1px solid #2c2c2c; border-top: 0; padding: 0 3px 3px; }
.layer-menu { height: 23px; align-items: center; padding-left: 6px; }
.layer-icons { display: flex; justify-content: flex-end; gap: 9px; height: 24px; padding: 4px 3px 0 0; }
.layer-icons svg { width: 16px; height: 12px; }
.layer-list { flex: 1; min-height: 0; background: #2b2b2b; display: grid; grid-template: minmax(0, 1fr) 12px / 1fr 12px; padding-top: 1px; }
.rows { overflow: hidden; }
table { border-collapse: collapse; width: 100%; }
tr { height: 20px; }
td { padding: 0 0 0 3px; color: #f6f6f6; font-weight: 600; }
td:not(:last-child) { width: 23px; }
td:nth-child(4) { width: 20px; }
td:last-child { padding-left: 2px; }
.box { display: block; width: 20px; height: 14px; line-height: 12px; text-align: center; border: 1px solid #1b1b1b; border-radius: 2px; }
.box.dim { color: #171717; }
.picked { background: #5f84a8; }
.picked td, .picked .box { color: #0a0a0a; }
.picked .box { border-color: #3d5a78; }
.picked .box.dim { color: #34506c; }
.sw { width: 16px; height: 14px; }
.coral { background: #ee877f; }
.violet { background: #c682ff; }
.sand { background: #cabb5e; }
.forest { background: #1c4415; }
.gray { background: #444; }
.slash { border-right: 1px solid #ccc; background: linear-gradient(to bottom right, transparent calc(50% - 1px), #ddd 50%, transparent calc(50% + 1px)); }
.a { border: 5px solid transparent; }
.up { border-bottom-color: #a8a8a8; border-top: 0; }
.down { border-top-color: #a8a8a8; border-bottom: 0; }
.prev { border-right-color: #b8b8b8; border-left: 0; }
.next { border-left-color: #b8b8b8; border-right: 0; }
.thumb { background: #5d5d5d; border-radius: 4px; }
.vbar { display: flex; flex-direction: column; align-items: center; gap: 5px; padding: 2px 0 4px; }
.vbar .thumb { width: 10px; flex: 1; margin-bottom: 7px; }
.hbar { display: flex; align-items: center; gap: 5px; padding: 0 3px 0 2px; }
.hbar .thumb { width: 159px; height: 10px; }
.hbar .next { margin-left: auto; }

.side-tabs { flex: none; width: 20px; background: #393939; display: flex; flex-direction: column; gap: 4px; padding-top: 1px; }
.side-tab { writing-mode: vertical-rl; width: 20px; height: 110px; font-size: 12px; font-weight: 400; color: #828282; border-bottom: 1px solid #303030; }
.side-tab.current { height: 165px; background: #444; color: #dedede; }

.timebar { flex: none; height: 40px; display: flex; align-items: center; border-top: 2px solid #363636; border-bottom: 2px solid #363636; padding-right: 12px; }
.timeline { flex: 1; display: flex; overflow: hidden; height: 28px; margin: 0; padding: 0 0 0 23px; list-style: none; background: #2b2b2b; color: #858585; font-size: 12px; line-height: 12px; font-weight: 400; }
.timeline li { flex: 1 1 0; min-width: 0; padding-left: 1px; white-space: nowrap; background: linear-gradient(#7c7c7c, #7c7c7c) 0 13px / 2px 15px no-repeat; }
.timeline li:last-child { flex: 0 0 10px; overflow: hidden; }
.num { width: 88px; height: 22px; padding: 0 5px; font-size: 12px; }
.timebar .num { height: 18px; margin: 0 9px 0 7px; }
.play { display: flex; gap: 5px; }
.play button, .play svg { width: 18px; height: 18px; }

.rangebar { flex: none; height: 34px; display: flex; align-items: center; gap: 8px; border-bottom: 2px solid #363636; padding-right: 10px; }
.num.first { width: 73px; }
.range { flex: 1; height: 24px; background: #373737; padding: 3px 4px; }
.range-fill { height: 18px; display: flex; align-items: center; gap: 3px; padding: 0 4px; background: #5d5d5d; border-radius: 3px; font-size: 12px; }
.knob { width: 13px; height: 12px; border-radius: 4px; background: #929292; }
.rangebar .sep { margin: 0 3px 0 -2px; }
.tri { width: 9px; height: 7px; margin: 0 0 2px 3px; background: #9a9a9a; clip-path: polygon(0 0, 100% 0, 50% 100%, 0 0, 2px 1px, 50% 5px, 7px 1px, 2px 1px); }
.set { width: 102px; }
.rate { width: 101px; margin: 0 3px; }
.rate select { padding: 0 3px; }
.loop { margin-right: 6px; }

.cmdbar { flex: none; height: 34px; display: flex; align-items: center; border-bottom: 2px solid #363636; padding-right: 7px; }
.lang { width: 23px; display: flex; justify-content: flex-end; overflow: hidden; color: #eee; font-weight: 600; margin-right: 7px; }
.cmd { width: 358px; height: 22px; }
.cmd-grip { height: 10px; border-left: 1px dotted #888; margin: 0 3px 0 4px; }
.result { flex: 1; height: 24px; background: #2b2b2b; margin-right: 4px; }

.helpline { flex: none; height: 24px; display: flex; align-items: center; justify-content: space-between; }
.helpline span { width: 228px; display: flex; justify-content: flex-end; overflow: hidden; white-space: nowrap; font-size: 10px; }
.resize { width: 12px; height: 14px; align-self: flex-end; }
```
FILE: app.js
```js
// Icons of every viewport toolbar, in order; "|" is a separator.
const TOOLS = "cam camlock camgear mark plane pan pen | grid film resgate gatemask field safe title | wire shade half texcube checker bulb shadow | ao blur aa dof | iso | xray xjoint xcomp | expo".split(" ");
const MENUS = ["View", "Shading", "Lighting", "Show", "Renderer", "Panels"];

for (const panel of document.querySelectorAll(".panel")) {
  const on = panel.dataset.on.split(" ");
  const off = panel.dataset.off.split(" ");
  const lead = panel.classList.contains("left") ? [] : ["|"];
  const tools = lead.concat(TOOLS).map(t => t === "|"
    ? '<i class="sep"></i>'
    : `<button class="pt${on.includes(t) ? " on" : ""}" aria-label="${t}"${off.includes(t) ? " disabled" : ""}><svg><use href="#${t}"/></svg></button>`);
  panel.insertAdjacentHTML("afterbegin",
    `<nav class="menu">${MENUS.map(m => `<button>${m}</button>`).join("")}</nav>
     <div class="panel-tools">${tools.join("")}<input type="text" value="0.00" aria-label="Exposure"></div>`);
}

const timeline = document.querySelector(".timeline");
for (let frame = 10; frame <= 360; frame += 10) {
  timeline.insertAdjacentHTML("beforeend", `<li>${frame}</li>`);
}
```
